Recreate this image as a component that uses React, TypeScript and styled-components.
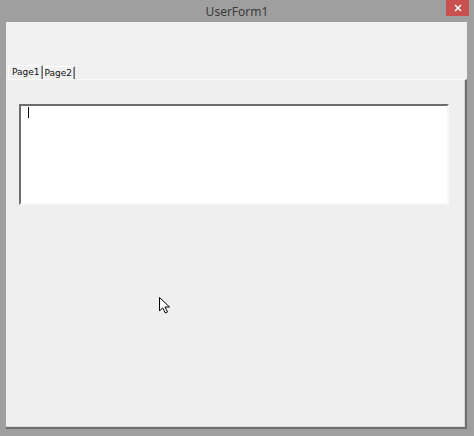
import React from 'react';
import styled, { createGlobalStyle } from 'styled-components';

const GlobalStyle = createGlobalStyle`
  html, body {
    margin: 0;
    padding: 0;
    background: #9f9f9f;
  }
`;

const Window = styled.div`
  width: 474px;
  height: 436px;
  background: #9f9f9f;
  display: flex;
  flex-direction: column;
  position: relative;
  overflow: hidden;
`;

const TitleBar = styled.div`
  height: 22px;
  padding-top: 1px;
  box-sizing: border-box;
  display: flex;
  align-items: center;
  justify-content: center;
  position: relative;
  font-family: 'Noto Sans', 'Open Sans', sans-serif;
  font-size: 12px;
  color: #3a3a3a;
`;

const CloseButton = styled.div`
  position: absolute;
  top: 0;
  right: 5px;
  width: 23px;
  height: 16px;
  background: #c9504f;
  display: flex;
  align-items: center;
  justify-content: center;
`;

const Client = styled.div`
  margin: 0 7px 0 6px;
  height: 407px;
  background: #f0f0f0;
  display: flex;
  flex-direction: column;
`;

const TabStrip = styled.div`
  margin-top: 43px;
  height: 14px;
  display: flex;
  align-items: flex-end;
  padding-left: 2px;
`;

const Tab = styled.div<{ $active?: boolean }>`
  height: ${p => (p.$active ? 14 : 13)}px;
  padding: 0 2px 0 ${p => (p.$active ? 3 : 1)}px;
  font-family: 'DejaVu Sans', 'Liberation Sans', sans-serif;
  font-size: 9px;
  line-height: 13px;
  color: #111;
  border-left: 1px solid #ffffff;
  border-right: 1px solid #6c6c6c;
  box-shadow: inset -1px 0 0 #a0a0a0;
  border-top: 1px solid #ffffff;
  box-sizing: border-box;
`;

const Page = styled.div`
  flex: 1;
  border-top: 1px solid #fbfbfb;
  border-right: 2px solid #6f6f6f;
  border-bottom: 2px solid #6f6f6f;
  box-shadow: inset -1px -1px 0 #d8d8d8;
  padding: 24px 15px 0 13px;
  background: #efefef;
  position: relative;
`;

const TextBox = styled.div`
  width: 430px;
  height: 101px;
  box-sizing: border-box;
  background: #ffffff;
  border-top: 2px solid #6d6d6d;
  border-left: 2px solid #6d6d6d;
  border-right: 2px solid #f7f7f7;
  border-bottom: 2px solid #f7f7f7;
  padding: 1px 0 0 7px;
`;

const Caret = styled.div`
  width: 1px;
  height: 11px;
  background: #000;
`;

const Pointer = styled.svg`
  position: absolute;
  left: 159px;
  top: 297px;
`;

export default function App() {
  return (
    <>
      <GlobalStyle />
      <Window>
        <TitleBar>
          UserForm1
          <CloseButton>
            <svg width="8" height="8" viewBox="0 0 8 8">
              <path d="M1 1L7 7M7 1L1 7" stroke="#ffffff" strokeWidth="1.5" />
            </svg>
          </CloseButton>
        </TitleBar>
        <Client>
          <TabStrip>
            <Tab $active>Page1</Tab>
            <Tab>Page2</Tab>
          </TabStrip>
          <Page>
            <TextBox>
              <Caret />
            </TextBox>
          </Page>
        </Client>
        <Pointer width="12" height="17" viewBox="0 0 12 17">
          <path d="M0.5 0.5V14L3.7 10.8L6.3 16L8.5 15L6 10H10.5Z" fill="#ffffff" stroke="#000" strokeWidth="1" strokeLinejoin="miter" />
        </Pointer>
      </Window>
    </>
  );
}
